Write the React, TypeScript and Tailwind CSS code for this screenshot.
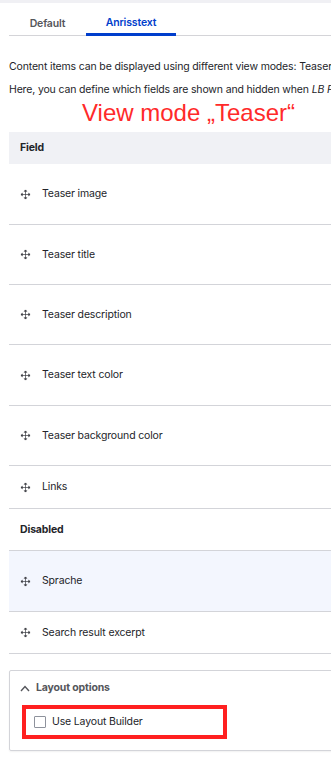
import React from "react";

const MoveIcon = () => (
  <svg width="11" height="11" viewBox="0 0 16 16" fill="none" stroke="#3b3c42" strokeWidth="1" className="shrink-0">
    <path d="M8 2v12M2 8h12" />
    <path d="M6.2 3.4L8 1.3l1.8 2.1Z" fill="#3b3c42" />
    <path d="M6.2 12.6L8 14.7l1.8-2.1Z" fill="#3b3c42" />
    <path d="M3.4 6.2L1.3 8l2.1 1.8Z" fill="#3b3c42" />
    <path d="M12.6 6.2L14.7 8l-2.1 1.8Z" fill="#3b3c42" />
  </svg>
);

const Row = ({ label, h, bg }: { label: string; h: string; bg?: string }) => (
  <div className={`flex items-center border-b border-[#d3d4d9] pl-[11px] ${h} ${bg ?? ""}`}>
    <MoveIcon />
    <span className="ml-[11px] text-[10.5px] tracking-[-0.15px] text-[#232429]">{label}</span>
  </div>
);

export default function App() {
  return (
    <div className="w-[331px] h-[757px] overflow-hidden bg-white text-[#232429]" style={{ fontFamily: "Inter, 'Liberation Sans', sans-serif" }}>
      <div className="h-[3px] bg-[#f0f0f4]" />
      <div className="ml-[9px] w-[400px] flex h-[33px] border-b border-[#d4d4d8]">
        <div className="w-[77px] flex items-center justify-center pt-[10px] text-[10.5px] tracking-[-0.15px] font-semibold text-[#55565b]">Default</div>
        <div className="w-[90px] flex items-center justify-center pt-[10px] text-[10.5px] tracking-[-0.15px] font-semibold text-[#003ecc] border-b-[3px] border-[#003ecc] -mb-[1px]">Anrisstext</div>
      </div>
      <div className="ml-[9px] w-[500px] mt-[19px] text-[10.5px] tracking-[-0.15px] leading-[23px] whitespace-nowrap text-[#232429]">
        <p>Content items can be displayed using different view modes: Teaser, Full content, Print, RSS, etc.</p>
        <p>Here, you can define which fields are shown and hidden when <em>LB Page</em> content is displayed.</p>
      </div>
      <div className="pl-[82px] h-[24px] flex items-center text-[24px] text-[#ff2a2a] whitespace-nowrap" style={{ fontFamily: "'Liberation Sans', Arial, sans-serif" }}>
        View mode „Teaser“
      </div>
      <div className="ml-[9px] w-[400px] mt-[7px]">
        <div className="h-[32px] bg-[#f0f1f5] flex items-center pl-[11px] text-[10.5px] tracking-[-0.15px] font-bold">Field</div>
        <Row label="Teaser image" h="h-[61px]" />
        <Row label="Teaser title" h="h-[60px]" />
        <Row label="Teaser description" h="h-[60px]" />
        <Row label="Teaser text color" h="h-[61px]" />
        <Row label="Teaser background color" h="h-[60px]" />
        <Row label="Links" h="h-[43px]" />
        <div className="h-[42px] flex items-center border-b border-[#d3d4d9] pl-[11px] text-[10.5px] tracking-[-0.15px] font-bold">Disabled</div>
        <Row label="Sprache" h="h-[61px]" bg="bg-[#f3f6fe]" />
        <Row label="Search result excerpt" h="h-[42px]" />
      </div>
      <div className="ml-[9px] w-[400px] mt-[16px] h-[81px] border border-[#d3d4d9] rounded-[2px] shadow-[0_1px_2px_rgba(0,0,0,0.06)]">
        <div className="flex items-center h-[34px] pl-[10px]">
          <svg width="10" height="7" viewBox="0 0 10 7" fill="none" stroke="#55565b" strokeWidth="1.4">
            <path d="M1 6l4-4.5L9 6" />
          </svg>
          <span className="ml-[6px] text-[10.5px] tracking-[-0.15px] font-bold text-[#55565b]">Layout options</span>
        </div>
        <div className="ml-[12px] w-[205px] h-[34px] border-[4px] border-[#ff2020] flex items-center pl-[8px]">
          <div className="w-[12px] h-[12px] border border-[#8e929c] rounded-[1px] bg-white" />
          <span className="ml-[6px] text-[10.5px] tracking-[-0.15px] text-[#232429]">Use Layout Builder</span>
        </div>
      </div>
    </div>
  );
}
